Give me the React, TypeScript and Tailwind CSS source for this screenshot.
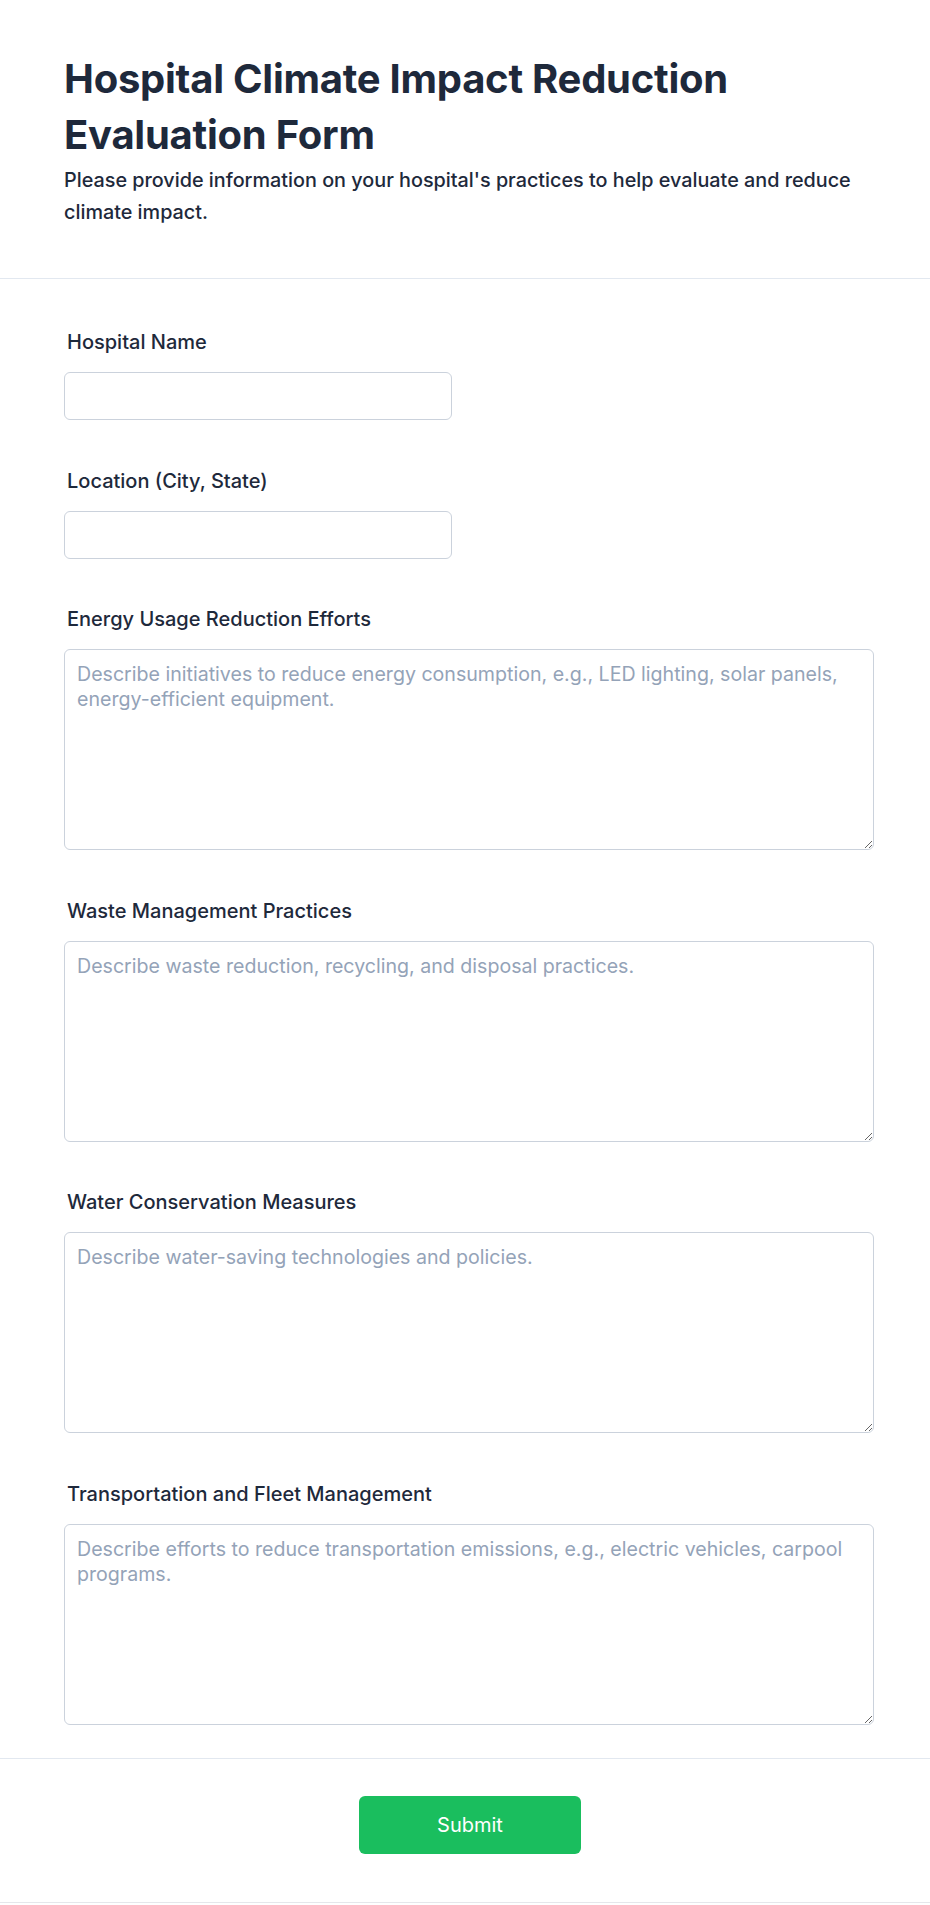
import React from "react";

const fields: { label: string; type: "input" | "textarea"; placeholder?: string }[] = [
  { label: "Hospital Name", type: "input" },
  { label: "Location (City, State)", type: "input" },
  {
    label: "Energy Usage Reduction Efforts",
    type: "textarea",
    placeholder:
      "Describe initiatives to reduce energy consumption, e.g., LED lighting, solar panels, energy-efficient equipment.",
  },
  {
    label: "Waste Management Practices",
    type: "textarea",
    placeholder: "Describe waste reduction, recycling, and disposal practices.",
  },
  {
    label: "Water Conservation Measures",
    type: "textarea",
    placeholder: "Describe water-saving technologies and policies.",
  },
  {
    label: "Transportation and Fleet Management",
    type: "textarea",
    placeholder:
      "Describe efforts to reduce transportation emissions, e.g., electric vehicles, carpool programs.",
  },
];

export default function App() {
  return (
    <div
      className="min-h-[1905px] w-full bg-white text-[#1e293b]"
      style={{ fontFamily: "Inter, 'Noto Sans', sans-serif" }}
    >
      <div className="border-b border-[#e5e7eb] bg-white">
        <header className="border-b border-[#e2e8f0] pl-16 pr-14 pt-[51px] pb-[50px]">
          <h1 className="text-[40px] font-bold leading-[56px] tracking-[-0.25px] text-[#1e293b]">
            Hospital Climate Impact Reduction Evaluation Form
          </h1>
          <p className="mt-[1px] text-[19.8px] font-medium leading-8 text-[#1e293b]">
            Please provide information on your hospital's practices to help evaluate and reduce climate impact.
          </p>
        </header>

        <form
          className="flex flex-col gap-[46.5px] pl-16 pr-14 pt-[49px] pb-[33px]"
          onSubmit={(e) => e.preventDefault()}
        >
          {fields.map((f) => (
            <div key={f.label} className="flex flex-col">
              <label className="mb-4 pl-[3px] text-xl font-medium leading-7 text-[#1e293b]">{f.label}</label>
              {f.type === "input" ? (
                <input
                  type="text"
                  className="h-12 w-[388px] rounded-md border border-[#cbd2dc] bg-white px-3 text-xl text-[#1e293b] outline-none"
                />
              ) : (
                <textarea
                  placeholder={f.placeholder}
                  className="h-[201px] w-full rounded-md border border-[#cbd2dc] bg-white px-3 py-3 text-[19.6px] leading-[25px] text-[#1e293b] outline-none placeholder:text-[#94a3b8]"
                />
              )}
            </div>
          ))}
        </form>

        <div className="flex justify-center border-t border-[#e2e8f0] pl-16 pr-14 pt-[37px] pb-[48px]">
          <button
            type="button"
            className="ml-[2px] h-[58px] w-[222px] rounded-md bg-[#1abe5e] text-xl text-white"
          >
            Submit
          </button>
        </div>
      </div>
    </div>
  );
}
